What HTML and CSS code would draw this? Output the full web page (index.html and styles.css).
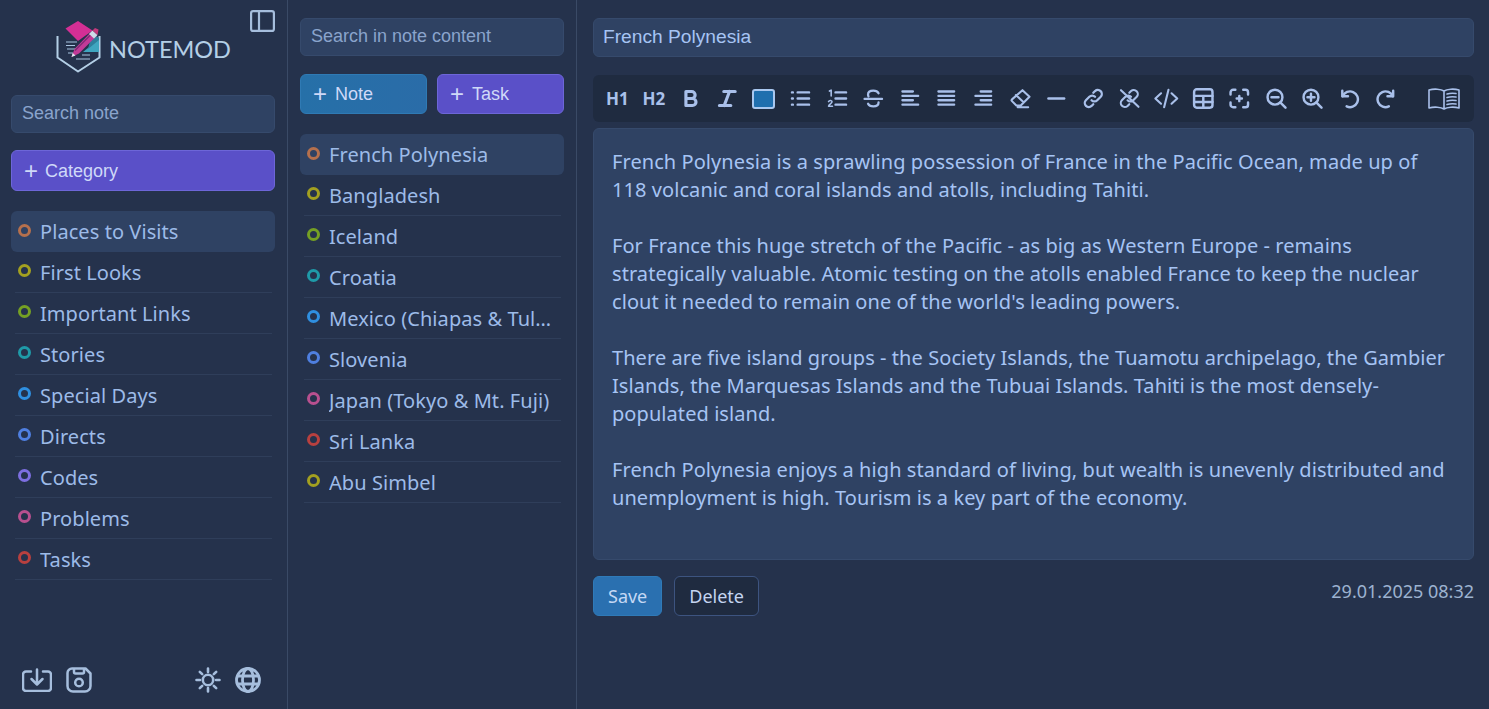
FILE: index.html
```html
<!DOCTYPE html>
<html lang="en">
<head>
<meta charset="utf-8">
<title>Notemod</title>
<link rel="stylesheet" href="styles.css">
</head>
<body>
<div class="app">
  <aside class="side">
    <div class="brand">
      <svg class="logo" viewBox="56 20 46 54" width="46" height="54" fill="none">
        <path d="M57.500 36v21.500L78 71.500 99.500 57.500V36" stroke="#b4cfe6" stroke-width="2" stroke-linejoin="round"/>
        <path d="M99 39l-16 13h16z" fill="#3fa6c0"/>
        <path d="M92 33l7 5v2l-11 9z" fill="#2f7f9c"/>
        <path d="M65.500 28.500L78 21l14.500 9.500L78 41z" fill="#d42f95"/>
        <path d="M66 42h11M66 45.500h9M67 49h9M68 53h5M82 55h8M76 59h14" stroke="#a9c4e0" stroke-width="1"/>
        <path d="M71.500 57l3-8L92 31l5 4.500-18 18z" fill="#c23a98"/>
        <path d="M75 50.500L93 32.500" stroke="#7d2a72" stroke-width="1.200"/>
        <path d="M89 34l3.500-3.500 5 4.500-3.500 3.500z" fill="#cfdcea"/>
        <path d="M92.500 30.500l2.500-2.500 3.500 1.500-1 5.500z" fill="#c23a7c"/>
        <path d="M71.500 57l1.200-4 2.800 2.600z" fill="#dfe8f2"/>
      </svg>
      <span class="brand-name">NOTEMOD</span>
      <svg class="toggle" viewBox="0 0 25 22" width="25" height="22" fill="none" stroke="#a6bedd" stroke-width="2.200"><rect x="1.100" y="1.100" width="22.800" height="19.800" rx="2"/><path d="M9 1v20"/></svg>
    </div>
    <div class="field search-note">Search note</div>
    <button class="btn btn-purple btn-cat"><span class="plus">+</span>Category</button>
    <ul class="list">
      <li class="item active"><i class="dot" style="border-color:#b5704d"></i><span class="label">Places to Visits</span></li>
      <li class="item"><i class="dot" style="border-color:#a3a020"></i><span class="label">First Looks</span></li>
      <li class="item"><i class="dot" style="border-color:#75a024"></i><span class="label">Important Links</span></li>
      <li class="item"><i class="dot" style="border-color:#1f9aa8"></i><span class="label">Stories</span></li>
      <li class="item"><i class="dot" style="border-color:#2f8fe0"></i><span class="label">Special Days</span></li>
      <li class="item"><i class="dot" style="border-color:#4f7fe0"></i><span class="label">Directs</span></li>
      <li class="item"><i class="dot" style="border-color:#7d6fe0"></i><span class="label">Codes</span></li>
      <li class="item"><i class="dot" style="border-color:#b8508f"></i><span class="label">Problems</span></li>
      <li class="item"><i class="dot" style="border-color:#b8403f"></i><span class="label">Tasks</span></li>
    </ul>
    <div class="side-foot">
      <div class="foot-group">
        <svg viewBox="0 0 30 24" width="30" height="24" fill="none" stroke="#a6bedd" stroke-width="2.500" stroke-linecap="round" stroke-linejoin="round"><path d="M9 3.500H4a3 3 0 0 0-3 3V20a3 3 0 0 0 3 3h22a3 3 0 0 0 3-3V6.500a3 3 0 0 0-3-3h-5"/><path d="M15 1.500V16M9.500 11l5.500 5.500 5.500-5.500"/></svg>
        <svg viewBox="0 0 26 26" width="26" height="26" fill="none" stroke="#a6bedd" stroke-width="2.500" stroke-linejoin="round"><path d="M6 1.500h13.500l5 5V19a5.500 5.500 0 0 1-5.500 5.500H7A5.500 5.500 0 0 1 1.500 19V6A4.500 4.500 0 0 1 6 1.500z"/><path d="M8 1.500V5a1.500 1.500 0 0 0 1.500 1.500h7A1.500 1.500 0 0 0 18 5V1.500"/><circle cx="13" cy="15.500" r="3.800"/></svg>
      </div>
      <div class="foot-group">
        <svg viewBox="0 0 26 26" width="26" height="26" fill="none" stroke="#a6bedd" stroke-width="2.600" stroke-linecap="round"><circle cx="13" cy="13" r="5.200"/><path d="M13 1.500v3.500M13 21v3.500M1.500 13H5M21 13h3.500M4.800 4.800l2.400 2.400M18.800 18.800l2.400 2.400M4.800 21.200l2.400-2.400M18.800 7.200l2.400-2.400"/></svg>
        <svg viewBox="0 0 26 26" width="26" height="26" fill="none" stroke="#a6bedd" stroke-width="2.800"><circle cx="13" cy="13" r="11.500"/><ellipse cx="13" cy="13" rx="5.500" ry="11.500"/><path d="M2.500 9h21M2.500 17h21"/></svg>
      </div>
    </div>
  </aside>

  <section class="mid">
    <div class="field search-content">Search in note content</div>
    <div class="mid-actions">
      <button class="btn btn-blue"><span class="plus">+</span>Note</button>
      <button class="btn btn-purple"><span class="plus">+</span>Task</button>
    </div>
    <ul class="list">
      <li class="item active"><i class="dot" style="border-color:#b5704d"></i><span class="label">French Polynesia</span></li>
      <li class="item"><i class="dot" style="border-color:#a3a020"></i><span class="label">Bangladesh</span></li>
      <li class="item"><i class="dot" style="border-color:#75a024"></i><span class="label">Iceland</span></li>
      <li class="item"><i class="dot" style="border-color:#1f9aa8"></i><span class="label">Croatia</span></li>
      <li class="item"><i class="dot" style="border-color:#2f8fe0"></i><span class="label">Mexico (Chiapas &amp; Tulum)</span></li>
      <li class="item"><i class="dot" style="border-color:#4f7fe0"></i><span class="label">Slovenia</span></li>
      <li class="item"><i class="dot" style="border-color:#b8508f"></i><span class="label">Japan (Tokyo &amp; Mt. Fuji)</span></li>
      <li class="item"><i class="dot" style="border-color:#b8403f"></i><span class="label">Sri Lanka</span></li>
      <li class="item"><i class="dot" style="border-color:#a3a020"></i><span class="label">Abu Simbel</span></li>
    </ul>
  </section>

  <main class="editor">
    <div class="field title">French Polynesia</div>
    <div class="toolbar">
      <span class="tb-text">H1</span>
      <span class="tb-text">H2</span>
      <svg class="ic" viewBox="0 0 24 24" stroke-width="3.600"><path d="M7 4h6.500a4 4 0 0 1 0 8H7zM7 12h7.500a4 4 0 0 1 0 8H7z"/></svg>
      <svg class="ic" viewBox="0 0 24 24" stroke-width="3.600"><path d="M8 4h13M3 20h13M14.500 4l-6 16"/></svg>
      <span class="swatch-cell"><span class="swatch"></span></span>
      <svg class="ic" viewBox="0 0 24 24" stroke-width="2.800"><path d="M9 5h13M9 12h13M9 19h13M2.500 5h1M2.500 12h1M2.500 19h1"/></svg>
      <svg class="ic" viewBox="0 0 24 24" stroke-width="2.800"><path d="M10 5h12M10 12h12M10 19h12"/><path stroke-width="1.800" d="M3 3.500l2-1V9M2 15.500c1-2 4-1.500 4 .3 0 1.500-3.500 2.500-4 5h4.500"/></svg>
      <svg class="ic" viewBox="0 0 24 24" stroke-width="2.600"><path d="M2 12.500h20M18 6c-1-2-3-3-6-3-3.500 0-6 1.500-6 4.500 0 .8.200 1.500.5 2M6 18c1 2 3 3 6 3 3.500 0 6-1.500 6-4.500"/></svg>
      <svg class="ic" viewBox="0 0 24 24" stroke-width="2.600"><path d="M3 4h12M3 9h18M3 14h12M3 19h18"/></svg>
      <svg class="ic" viewBox="0 0 24 24" stroke-width="2.600"><path d="M3 4h18M3 9h18M3 14h18M3 19h18"/></svg>
      <svg class="ic" viewBox="0 0 24 24" stroke-width="2.600"><path d="M9 4h12M3 9h18M9 14h12M3 19h18"/></svg>
      <svg class="ic" viewBox="0 0 24 24" stroke-width="2.400"><path d="M9 22h12M14.500 2.500l8 7.500-10 10H7.500l-5-5c-.6-.6-.6-1.400 0-2zM7 8l8.500 8"/></svg>
      <svg class="ic" viewBox="0 0 24 24" stroke-width="2.800"><path d="M3 12h18"/></svg>
      <svg class="ic" viewBox="0 0 24 24" stroke-width="2.600"><path d="M10 14a4.500 4.500 0 0 0 6.500 0l4-4a4.600 4.600 0 0 0-6.500-6.500l-2 2M14 10a4.500 4.500 0 0 0-6.500 0l-4 4a4.600 4.600 0 0 0 6.500 6.500l2-2"/></svg>
      <svg class="ic" viewBox="0 0 24 24" stroke-width="2.400"><path d="M10 14a4.500 4.500 0 0 0 6.500 0l4-4a4.600 4.600 0 0 0-6.500-6.500l-2 2M14 10a4.500 4.500 0 0 0-6.500 0l-4 4a4.600 4.600 0 0 0 6.500 6.500l2-2M2.500 2.500l20 19"/></svg>
      <svg class="ic" viewBox="0 0 28 24" stroke-width="2.400"><path d="M8 6l-6.500 6L8 18M20 6l6.500 6L20 18M16.500 2l-5 20"/></svg>
      <svg class="ic" viewBox="0 0 24 24" stroke-width="2.800"><rect x="1.500" y="1.500" width="21" height="21" rx="3"/><path d="M1.500 9h21M1.500 16h21M12 9v13.500"/></svg>
      <svg class="ic" viewBox="0 0 24 24" stroke-width="2.800"><path d="M2 7.500V5a3 3 0 0 1 3-3h2.500M16.500 2H19a3 3 0 0 1 3 3v2.500M22 16.500V19a3 3 0 0 1-3 3h-2.500M7.500 22H5a3 3 0 0 1-3-3v-2.500M9 12h6M12 9v6"/></svg>
      <svg class="ic" viewBox="0 0 24 24" stroke-width="2.800"><circle cx="10.500" cy="10.500" r="8.500"/><path d="M16.500 16.500L22.500 22.500M6.500 10.500h8"/></svg>
      <svg class="ic" viewBox="0 0 24 24" stroke-width="2.800"><circle cx="10.500" cy="10.500" r="8.500"/><path d="M16.500 16.500L22.500 22.500M6.500 10.500h8M10.500 6.500v8"/></svg>
      <svg class="ic" viewBox="0 0 24 24" stroke-width="2.800"><path d="M4 3v6.500h6.500"/><path d="M4.500 9.500A9 9 0 1 1 9 21"/></svg>
      <svg class="ic" viewBox="0 0 24 24" stroke-width="2.800"><path d="M21 3v6.500h-6.500"/><path d="M20.500 9.500A9 9 0 1 0 16 21"/></svg>
      <svg class="ic ic-book" viewBox="0 0 32 24" stroke-width="1.600"><path d="M16 4C13 2 6 1.500 1 3v18c5-1.500 12-1 15 1 3-2 10-2.500 15-1V3c-5-1.500-12-1-15 1zM16 4v18M19 7c2.500-.8 6-1 9-.5M19 10.500c2.500-.8 6-1 9-.5M19 14c2.500-.8 6-1 9-.5M19 17.500c2.500-.8 6-1 9-.5"/></svg>
    </div>
    <div class="content">
      <p>French Polynesia is a sprawling possession of France in the Pacific Ocean, made up of 118 volcanic and coral islands and atolls, including Tahiti.</p>
      <p>For France this huge stretch of the Pacific - as big as Western Europe - remains strategically valuable. Atomic testing on the atolls enabled France to keep the nuclear clout it needed to remain one of the world's leading powers.</p>
      <p>There are five island groups - the Society Islands, the Tuamotu archipelago, the Gambier Islands, the Marquesas Islands and the Tubuai Islands. Tahiti is the most densely-populated island.</p>
      <p>French Polynesia enjoys a high standard of living, but wealth is unevenly distributed and unemployment is high. Tourism is a key part of the economy.</p>
    </div>
    <div class="editor-foot">
      <button class="act act-save">Save</button>
      <button class="act act-delete">Delete</button>
      <span class="stamp">29.01.2025 08:32</span>
    </div>
  </main>
</div>
</body>
</html>
```
FILE: styles.css
```css
* { box-sizing: border-box; }
html, body { margin: 0; height: 100%; }
body {
  background: #25324c;
  color: #9dbbe8;
  font-family: "Noto Sans", sans-serif;
  overflow: hidden;
}
.app { display: flex; height: 709px; }
.side {
  width: 288px;
  flex: none;
  padding: 0 12px 0 11px;
  border-right: 1px solid #3a4a66;
  display: flex;
  flex-direction: column;
}
.mid {
  width: 289px;
  flex: none;
  padding: 18px 12px;
  border-right: 1px solid #3a4a66;
}
.editor {
  flex: 1;
  min-width: 0;
  padding: 18px 15px 0 16px;
  display: flex;
  flex-direction: column;
}
.brand {
  height: 95px;
  position: relative;
  display: flex;
  align-items: flex-start;
  padding: 20px 0 0 45px;
}
.logo { flex: none; }
.brand-name {
  font-family: "Lato", sans-serif;
  color: #b4cfe6;
  font-size: 23.500px;
  line-height: 28px;
  margin: 15px 0 0 7px;
}
.toggle { position: absolute; top: 10px; right: 0; }
.field {
  height: 38px;
  background: #2f4263;
  border: 1px solid #364a6c;
  border-radius: 6px;
  font-family: "Liberation Sans", sans-serif;
  font-size: 18px;
  line-height: 35px;
  padding: 0 10px;
  color: #8aa4cc;
}
.title {
  color: #a6c4f4;
  height: 39px;
  line-height: 36px;
  flex: none;
  font-size: 19.200px;
  padding: 0 9px;
}
.btn {
  display: flex;
  align-items: center;
  height: 41px;
  padding: 0 12px;
  border-radius: 6px;
  font-family: "Liberation Sans", sans-serif;
  font-size: 18px;
  color: #cfd9f8;
  border: 1px solid transparent;
}
.plus { font-size: 24px; line-height: 1; margin-right: 7px; font-weight: 400; }
.btn-purple { background: #5a50c8; border-color: #6d66d8; }
.btn-blue { background: linear-gradient(90deg, #2670a8, #2a6ca8); border-color: #2f7ab4; }
.btn-cat { width: 100%; margin-top: 17px; padding-top: 1px; }
.list { list-style: none; margin: 20px 0 0; padding: 0; }
.item {
  height: 41px;
  display: flex;
  align-items: center;
  padding: 0 3px;
  margin: 0 3px 0 4px;
  font-size: 20px;
  letter-spacing: .07px;
  border-bottom: 1px solid #2f3e5a;
  color: #9dbbe8;
  white-space: nowrap;
}
.item.active {
  background: #2f4263;
  border-radius: 6px;
  border-bottom: 0;
  margin: 0;
  padding: 0 3px 0 7px;
}
.dot {
  width: 13px;
  height: 13px;
  flex: none;
  border: 3px solid;
  border-radius: 50%;
  margin: -3px 9px 0 0;
}
.label { overflow: hidden; text-overflow: ellipsis; }
.side-foot {
  margin-top: auto;
  padding: 0 14px 16px 11px;
  display: flex;
  justify-content: space-between;
  align-items: center;
}
.foot-group { display: flex; align-items: center; gap: 14px; }
.mid-actions { display: grid; grid-template-columns: 127px 127px; gap: 10px; margin-top: 18px; }
.mid-actions .btn { height: 40px; }
.mid-actions .plus { margin-right: 8px; }
.mid .list { margin-top: 20px; }
.toolbar {
  flex: none;
  margin-top: 18px;
  height: 47px;
  background: #1f2b40;
  border-radius: 6px;
  display: flex;
  align-items: center;
  padding: 0 6px;
}
.tb-text {
  flex: none;
  width: 36.600px;
  text-align: center;
  font-family: "Noto Sans", sans-serif;
  font-weight: 700;
  font-size: 17px;
  color: #a9c0ea;
}
.ic {
  width: 36.600px;
  height: 21px;
  flex: none;
  fill: none;
  stroke: #a9c0ea;
  stroke-linecap: round;
  stroke-linejoin: round;
}
.ic-book { width: 32px; height: 24px; margin-left: 24px; }
.swatch-cell { flex: none; width: 36.600px; display: flex; justify-content: center; }
.swatch {
  width: 23px;
  height: 20px;
  background: #1f6fae;
  border: 2px solid #a9c8f0;
  border-radius: 3px;
}
.content {
  flex: none;
  height: 432px;
  margin-top: 6px;
  background: #2f4263;
  border: 1px solid #364a6c;
  border-radius: 6px;
  padding: 19px 18px;
  font-size: 20px;
  letter-spacing: .07px;
  line-height: 28px;
  color: #a6c4f4;
}
.content p { margin: 0 0 28px; }
.editor-foot { display: flex; align-items: flex-start; gap: 12px; margin-top: 16px; }
.act {
  height: 40px;
  border-radius: 6px;
  font-family: "Noto Sans", sans-serif;
  font-size: 18px;
  padding: 0 14px;
}
.act-save { background: #2a70b0; border: 1px solid #2f7ab8; color: #c4d8f4; }
.act-delete { background: #1f2b40; border: 1px solid #3d5480; color: #c4d4f0; }
.stamp { margin-left: auto; font-size: 18px; color: #9db2d0; line-height: 30px; }
```
